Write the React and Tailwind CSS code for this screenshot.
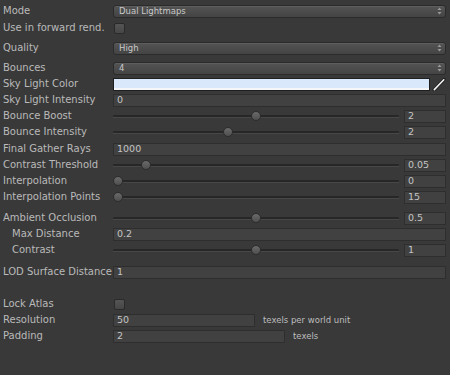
import React from "react";

const font = { fontFamily: '"DejaVu Sans", Verdana, sans-serif' };

function Label({ children, indent }) {
  return (
    <div
      className={`w-[113px] shrink-0 text-[10px] leading-none text-[#bababa] whitespace-nowrap ${indent ? "pl-[12px]" : "pl-[3px]"}`}
    >
      {children}
    </div>
  );
}

function Row({ className = "", children }) {
  return <div className={`flex h-[16px] items-center pr-[4px] ${className}`}>{children}</div>;
}

function ArrowGlyph() {
  return (
    <svg width="5" height="8" viewBox="0 0 5 8" className="shrink-0">
      <path d="M2.5 0.5 L4.5 3 L0.5 3 Z" fill="#9a9a9a" />
      <path d="M0.5 5 L4.5 5 L2.5 7.5 Z" fill="#9a9a9a" />
    </svg>
  );
}

function Dropdown({ value }) {
  return (
    <div className="flex h-[13px] flex-1 items-center justify-between rounded-[3px] border border-[#2b2b2b] bg-gradient-to-b from-[#545454] to-[#444444] pl-[5px] pr-[3px] shadow-[inset_0_1px_0_#5e5e5e]">
      <span className="text-[8.5px] leading-none text-[#c8c8c8]">{value}</span>
      <ArrowGlyph />
    </div>
  );
}

function Field({ value, className = "flex-1" }) {
  return (
    <div
      className={`flex h-[13px] items-center border border-[#2e2e2e] bg-[#414141] pl-[3px] text-[9.5px] leading-none text-[#c4c4c4] ${className}`}
    >
      {value}
    </div>
  );
}

function Checkbox() {
  return (
    <div className="ml-[1px] h-[11px] w-[11px] rounded-[2px] border border-[#2a2a2a] bg-gradient-to-b from-[#555555] to-[#474747]" />
  );
}

function Slider({ pct, value }) {
  return (
    <div className="flex flex-1 items-center">
      <div className="relative h-[13px] flex-1">
        <div className="absolute left-0 right-0 top-[5px] h-[2px] rounded-full bg-[#272727]" />
        <div className="absolute left-0 right-0 top-[7px] h-[1px] bg-[#474747]" />
        <div
          className="absolute top-[1.5px] h-[10px] w-[10px] -translate-x-1/2 rounded-full border border-[#2c2c2c] bg-gradient-to-b from-[#6a6a6a] to-[#4f4f4f]"
          style={{ left: `calc(5px + (100% - 10px) * ${pct / 100})` }}
        />
      </div>
      <Field value={value} className="ml-[5px] w-[42px]" />
    </div>
  );
}

function Eyedropper() {
  return (
    <svg width="14" height="13" viewBox="0 0 14 13" className="ml-[2px] shrink-0">
      <path d="M2 12 L12 1.5" stroke="#1e1e1e" strokeWidth="3.2" strokeLinecap="round" />
      <path d="M2.3 11.6 L11.8 1.8" stroke="#f2f2f2" strokeWidth="1.6" strokeLinecap="round" />
    </svg>
  );
}

export default function App() {
  return (
    <div className="h-[375px] w-[450px] overflow-hidden bg-[#393939] pt-[3px]" style={font}>
      <Row>
        <Label>Mode</Label>
        <Dropdown value="Dual Lightmaps" />
      </Row>
      <Row className="mt-[1px]">
        <Label>Use in forward rend.</Label>
        <Checkbox />
      </Row>
      <Row className="mt-[4px]">
        <Label>Quality</Label>
        <Dropdown value="High" />
      </Row>
      <Row className="mt-[4px]">
        <Label>Bounces</Label>
        <Dropdown value="4" />
      </Row>
      <Row>
        <Label>Sky Light Color</Label>
        <div className="flex h-[13px] flex-1 flex-col border border-[#1f1f1f]">
          <div className="flex-1 bg-[#d9e9fb]" />
          <div className="h-[2px] bg-[#f4f6f8]" />
        </div>
        <Eyedropper />
      </Row>
      <Row>
        <Label>Sky Light Intensity</Label>
        <Field value="0" />
      </Row>
      <Row>
        <Label>Bounce Boost</Label>
        <Slider pct={50} value="2" />
      </Row>
      <Row>
        <Label>Bounce Intensity</Label>
        <Slider pct={40} value="2" />
      </Row>
      <Row className="mt-[1px]">
        <Label>Final Gather Rays</Label>
        <Field value="1000" />
      </Row>
      <Row>
        <Label>Contrast Threshold</Label>
        <Slider pct={10} value="0.05" />
      </Row>
      <Row>
        <Label>Interpolation</Label>
        <Slider pct={0} value="0" />
      </Row>
      <Row>
        <Label>Interpolation Points</Label>
        <Slider pct={0} value="15" />
      </Row>
      <Row className="mt-[5px]">
        <Label>Ambient Occlusion</Label>
        <Slider pct={50} value="0.5" />
      </Row>
      <Row>
        <Label indent>Max Distance</Label>
        <Field value="0.2" />
      </Row>
      <Row>
        <Label indent>Contrast</Label>
        <Slider pct={50} value="1" />
      </Row>
      <Row className="mt-[6px]">
        <Label>LOD Surface Distance</Label>
        <Field value="1" />
      </Row>
      <Row className="mt-[16px]">
        <Label>Lock Atlas</Label>
        <Checkbox />
      </Row>
      <Row>
        <Label>Resolution</Label>
        <Field value="50" className="w-[142px]" />
        <span className="ml-[8px] text-[8.5px] leading-none text-[#bdbdbd]">texels per world unit</span>
      </Row>
      <Row>
        <Label>Padding</Label>
        <Field value="2" className="w-[172px]" />
        <span className="ml-[8px] text-[8.5px] leading-none text-[#bdbdbd]">texels</span>
      </Row>
    </div>
  );
}
